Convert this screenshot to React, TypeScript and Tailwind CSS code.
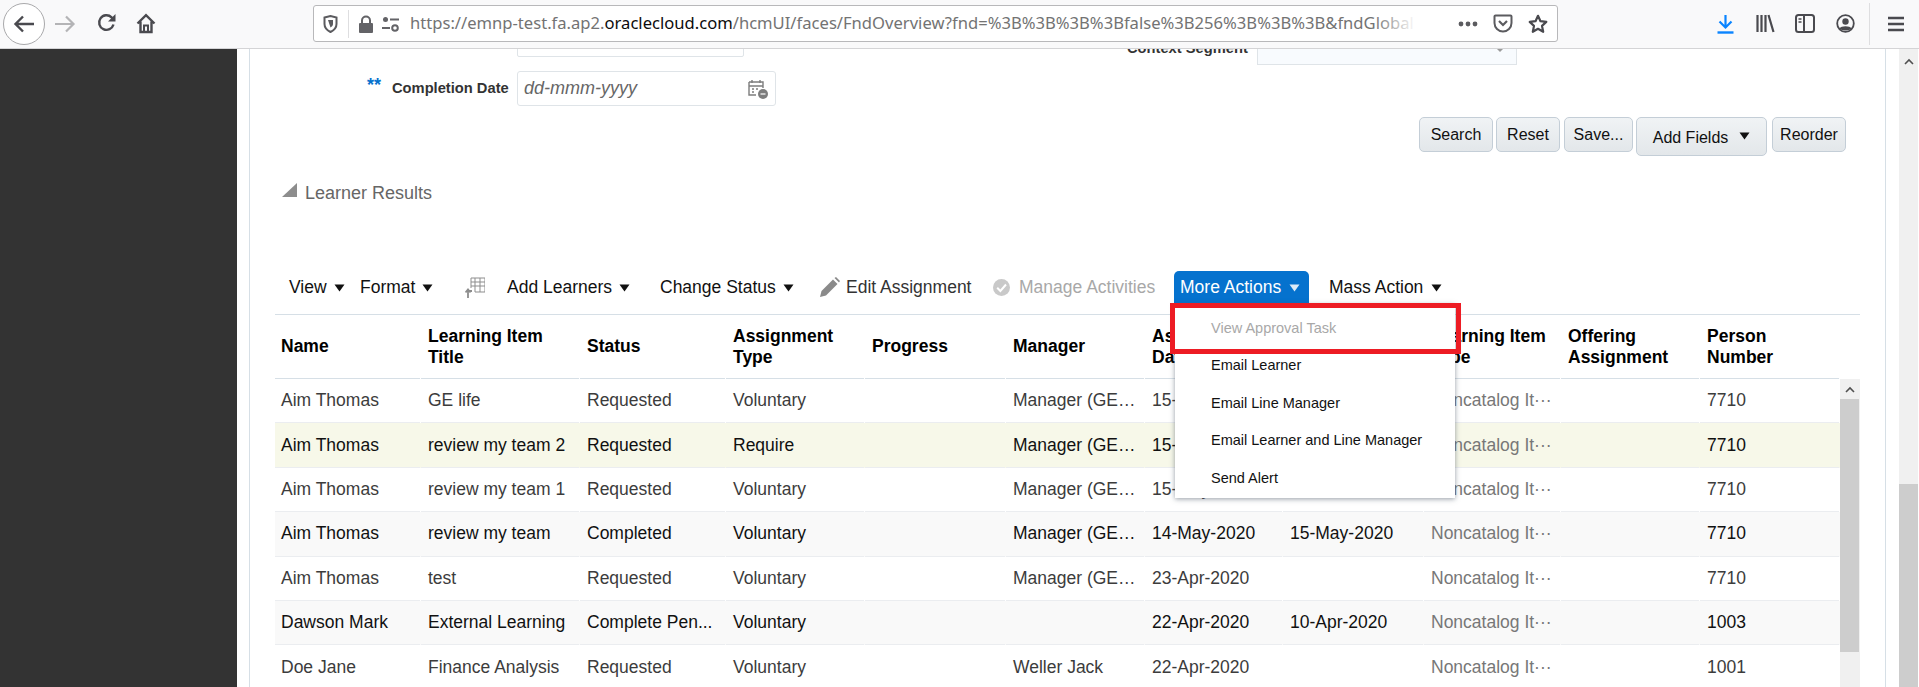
const ARIAL = "font-['Liberation_Sans',Arial,sans-serif]";

const COLS = "grid-cols-[146px_159px_146px_139px_141px_139px_138px_141px_137px_139px_140px]";

type Row = { c: string[]; bg: string; text: string };

const nc = "Noncatalog It\u00B7\u00B7\u00B7";
const mgr = "Manager (GE\u2026";

const rows: Row[] = [
  { c: ["Aim Thomas", "GE life", "Requested", "Voluntary", "", mgr, "15-May-2020", "", nc, "", "7710"], bg: "bg-white", text: "text-[#3c3c3c]" },
  { c: ["Aim Thomas", "review my team 2", "Requested", "Require", "", mgr, "15-May-2020", "", nc, "", "7710"], bg: "bg-[#f7f8e9]", text: "text-[#111111]" },
  { c: ["Aim Thomas", "review my team 1", "Requested", "Voluntary", "", mgr, "15-May-2020", "", nc, "", "7710"], bg: "bg-white", text: "text-[#3c3c3c]" },
  { c: ["Aim Thomas", "review my team", "Completed", "Voluntary", "", mgr, "14-May-2020", "15-May-2020", nc, "", "7710"], bg: "bg-[#f9f9f9]", text: "text-[#111111]" },
  { c: ["Aim Thomas", "test", "Requested", "Voluntary", "", mgr, "23-Apr-2020", "", nc, "", "7710"], bg: "bg-white", text: "text-[#3c3c3c]" },
  { c: ["Dawson Mark", "External Learning", "Complete Pen...", "Voluntary", "", "", "22-Apr-2020", "10-Apr-2020", nc, "", "1003"], bg: "bg-[#f9f9f9]", text: "text-[#111111]" },
  { c: ["Doe Jane", "Finance Analysis", "Requested", "Voluntary", "", "Weller Jack", "22-Apr-2020", "", nc, "", "1001"], bg: "bg-white", text: "text-[#3c3c3c]" },
];

const headers: string[][] = [
  ["Name"], ["Learning Item", "Title"], ["Status"], ["Assignment", "Type"], ["Progress"], ["Manager"],
  ["Assigned", "Date"], ["Completion", "Date"], ["Learning Item", "Type"], ["Offering", "Assignment"], ["Person", "Number"],
];

function Caret({ color = "#111111", className = "" }: { color?: string; className?: string }) {
  return (
    <svg width="11" height="8" viewBox="0 0 11 8" className={className}>
      <path d="M0.5 0.5H10.5L5.5 7.5Z" fill={color} />
    </svg>
  );
}

function Icon({ w, h, children, className = "" }: { w: number; h: number; children: React.ReactNode; className?: string }) {
  return (
    <svg width={w} height={h} viewBox={`0 0 ${w} ${h}`} className={`shrink-0 ${className}`}>
      {children}
    </svg>
  );
}

function BrowserBar() {
  const ic = "#4a4a4f";
  return (
    <div className={`h-[49px] shrink-0 bg-[#f9f9fa] border-b border-[#d4d4d6] flex items-center ${ARIAL}`}>
      <div className="ml-[3px] -mt-[1px] w-[42px] h-[42px] rounded-full border border-[#a9a9ab] bg-white flex items-center justify-center">
        <Icon w={22} h={20}>
          <path d="M21 10H3M10 2.5L2.5 10L10 17.5" fill="none" stroke={ic} strokeWidth="2.4" />
        </Icon>
      </div>
      <Icon w={21} h={20} className="ml-[10px] -mt-[1px]">
        <path d="M0 10H18M11 2.5L18.5 10L11 17.5" fill="none" stroke="#b4b4b6" strokeWidth="2.2" />
      </Icon>
      <Icon w={20} h={20} className="ml-[21px] -mt-[2px]">
        <path d="M16.5 11.5A7.3 7.3 0 1 1 14.6 4.4L17 6.5" fill="none" stroke={ic} strokeWidth="2.4" />
        <path d="M18.5 1V8.5H11Z" fill={ic} />
      </Icon>
      <Icon w={20} h={21} className="ml-[19px] -mt-[1px]">
        <path d="M1.5 10.5L10 2.2L18.5 10.5M4.5 8.5V19H15.5V8.5" fill="none" stroke={ic} strokeWidth="2.4" />
        <path d="M8 19V12.5H12V19" fill="none" stroke={ic} strokeWidth="2" />
      </Icon>
      <div className="relative ml-[157px] w-[1245px] h-[37px] -mt-[1px] bg-white border border-[#b8b8ba] rounded-[3px] flex items-center overflow-hidden">
        <Icon w={15} h={18} className="ml-[9px]">
          <path d="M1.5 2.5L7.5 1L13.5 2.5V9C13.5 13 10.5 15.5 7.5 17C4.5 15.5 1.5 13 1.5 9Z" fill="none" stroke="#5b5b5f" strokeWidth="2" />
          <path d="M5 5H10V9C10 10.5 9 11.5 7.5 12.5Z" fill="#5b5b5f" />
        </Icon>
        <div className="ml-[10px] w-px h-[28px] bg-[#dedee0]" />
        <Icon w={16} h={18} className="ml-[9px]">
          <path d="M4 8V5.5A4 4 0 0 1 12 5.5V8" fill="none" stroke="#636367" strokeWidth="2" />
          <rect x="1" y="8" width="14" height="10" rx="1" fill="#636367" />
        </Icon>
        <Icon w={17} h={16} className="ml-[8px]">
          <circle cx="3.5" cy="3.5" r="2.5" fill="#636367" />
          <path d="M8 3.5H17M0 12H8" stroke="#636367" strokeWidth="2" />
          <circle cx="13" cy="12" r="2.8" fill="none" stroke="#636367" strokeWidth="2" />
        </Icon>
        <div className="ml-[11px] w-[1003px] overflow-hidden whitespace-nowrap font-['Noto_Sans',sans-serif] text-[16.6px] text-[#737373]">
          https://emnp-test.fa.ap2.<span className="text-[#0c0c0d]">oraclecloud.com</span>/hcmUI/faces/FndOverview?fnd=%3B%3B%3B%3Bfalse%3B256%3B%3B%3B&amp;fndGlobalIte
        </div>
        <div className="absolute left-[1060px] top-0 w-[42px] h-full bg-gradient-to-r from-white/0 to-white" />
        <Icon w={20} h={6} className="ml-[45px]">
          <circle cx="3" cy="3" r="2.4" fill="#5b5b5f" />
          <circle cx="10" cy="3" r="2.4" fill="#5b5b5f" />
          <circle cx="17" cy="3" r="2.4" fill="#5b5b5f" />
        </Icon>
        <Icon w={20} h={19} className="ml-[15px]">
          <path d="M2.5 1.5H17.5A1 1 0 0 1 18.5 2.5V9A8.5 8.5 0 0 1 1.5 9V2.5A1 1 0 0 1 2.5 1.5Z" fill="none" stroke="#5b5b5f" strokeWidth="2" />
          <path d="M6 7L10 11L14 7" fill="none" stroke="#5b5b5f" strokeWidth="2.2" />
        </Icon>
        <Icon w={20} h={20} className="ml-[15px]">
          <path d="M10 1.8L12.5 7.2L18.3 7.9L14 11.9L15.2 17.8L10 14.8L4.8 17.8L6 11.9L1.7 7.9L7.5 7.2Z" fill="none" stroke="#4a4a4f" strokeWidth="2.2" strokeLinejoin="round" />
        </Icon>
      </div>
      <Icon w={17} h={20} className="ml-[159px] -mt-[1px]">
        <path d="M8.5 1V13M2.5 7.5L8.5 13.5L14.5 7.5" fill="none" stroke="#0a84ff" strokeWidth="2.2" />
        <path d="M0.5 18.5H16.5" stroke="#0a84ff" strokeWidth="2.4" />
      </Icon>
      <Icon w={19} h={19} className="ml-[22px] -mt-[1px]">
        <path d="M1.5 1V18M5.5 1V18M9.5 1V18M12.5 1L17.5 18" fill="none" stroke={ic} strokeWidth="2.2" />
      </Icon>
      <Icon w={20} h={19} className="ml-[20px] -mt-[1px]">
        <rect x="1" y="1" width="18" height="17" rx="2.5" fill="none" stroke={ic} strokeWidth="2" />
        <path d="M9 1V18" stroke={ic} strokeWidth="2" />
        <path d="M3.5 5H6.5M3.5 8H6.5" stroke={ic} strokeWidth="1.6" />
      </Icon>
      <Icon w={19} h={19} className="ml-[21px] -mt-[2px]">
        <circle cx="9.5" cy="9.5" r="8.3" fill="none" stroke={ic} strokeWidth="1.8" />
        <circle cx="9.5" cy="7.5" r="3.2" fill={ic} />
        <path d="M3.5 14.5C5 11.5 14 11.5 15.5 14.5C13.5 17 5.5 17 3.5 14.5Z" fill={ic} />
      </Icon>
      <div className="ml-[14px] w-px h-[42px] bg-[#dedee0]" />
      <Icon w={16} h={16} className="ml-[18px] -mt-[1px]">
        <path d="M0 2H16M0 8H16M0 14H16" stroke={ic} strokeWidth="2.4" />
      </Icon>
    </div>
  );
}

function FormArea() {
  const btn = "h-[35px] flex items-center justify-center rounded-[5px] border border-[#c4ced7] bg-gradient-to-b from-[#f0f3f5] to-[#e3e7ea] text-[16px] text-[#111111]";
  return (
    <div>
      <div className="h-[16px] overflow-hidden flex items-start">
        <div className="ml-[267px] w-[227px] h-[32px] -mt-[24px] border border-[#dfe4e8] rounded-[2px] bg-white shrink-0" />
        <div className="ml-[383px] w-[124px] -mt-[11px] text-[14.7px] leading-[21px] font-bold text-[#333333] whitespace-nowrap shrink-0">Context Segment</div>
        <div className="ml-[6px] w-[260px] h-[32px] -mt-[16px] border border-[#dfe4e8] bg-[#f8fbfe] shrink-0 flex justify-end items-end pr-[12px] pb-[12px]">
          <Icon w={8} h={4}><path d="M0 0H8L4 4Z" fill="#9a9a9a" /></Icon>
        </div>
      </div>
      <div className="mt-[6px] h-[35px] flex items-center">
        <span className="ml-[117px] w-[25px] -mt-[8px] text-[18px] leading-none font-bold text-[#0572ce]">**</span>
        <span className="w-[125px] text-[14.7px] font-bold text-[#333333] whitespace-nowrap">Completion Date</span>
        <div className="w-[259px] h-[35px] border border-[#dfe4e8] rounded-[3px] bg-white flex items-center justify-between pl-[6px] pr-[6px]">
          <span className="text-[18px] italic text-[#666666]">dd-mmm-yyyy</span>
          <Icon w={22} h={22}>
            <path d="M2 4H16V10M2 4V17H9M2 8H16M5 2V5M13 2V5" fill="none" stroke="#7d7d7d" strokeWidth="1.4" />
            <path d="M5 11H7M9 11H11M5 14H7" stroke="#7d7d7d" strokeWidth="1.4" />
            <circle cx="16" cy="16" r="5" fill="#7d7d7d" />
            <path d="M13.5 16H18.5" stroke="#ffffff" strokeWidth="1.2" />
          </Icon>
        </div>
      </div>
      <div className="mt-[11px] h-[39px] flex items-start justify-end pr-[39px]">
        <div className={`${btn} w-[74px]`}>Search</div>
        <div className={`${btn} w-[64px] ml-[3px]`}>Reset</div>
        <div className={`${btn} w-[69px] ml-[4px]`}>Save...</div>
        <div className={`${btn} !h-[39px] w-[131px] ml-[3px] gap-[11px] pb-0`}>
          <span className="mt-[3px]">Add Fields</span>
          <Caret className="-mt-[2px]" />
        </div>
        <div className={`${btn} w-[74px] ml-[5px]`}>Reorder</div>
      </div>
      <div className="mt-[25px] h-[24px] ml-[32px] flex items-center">
        <Icon w={15} h={14} className="-mt-[6px]"><path d="M15 0V14H0Z" fill="#8d8d8d" /></Icon>
        <span className="ml-[8px] text-[18px] text-[#666666]">Learner Results</span>
      </div>
    </div>
  );
}

function ActionBar() {
  return (
    <div className="h-[44px] border-b border-[#d6dfe6] flex items-start text-[17.5px] text-[#111111] whitespace-nowrap">
      <div className="h-[33px] w-[85px] pl-[14px] flex items-center">View<Caret className="ml-[7px]" /></div>
      <div className="h-[33px] w-[105px] flex items-center">Format<Caret className="ml-[7px]" /></div>
      <div className="h-[33px] w-[42px] flex items-center">
        <Icon w={20} h={22}>
          <path d="M6 1H20V15H10M6 1V11M6 5H20M6 9H20M10 1V15M15 1V15" fill="none" stroke="#8d8d8d" strokeWidth="1" />
          <path d="M3 21V13M0.5 15.5L3 12.5L5.5 15.5M3 14H7" fill="none" stroke="#8d8d8d" strokeWidth="1.8" />
        </Icon>
      </div>
      <div className="h-[33px] w-[153px] flex items-center">Add Learners<Caret className="ml-[7px]" /></div>
      <div className="h-[33px] w-[159px] flex items-center">Change Status<Caret className="ml-[7px]" /></div>
      <div className="h-[33px] w-[27px] flex items-center">
        <Icon w={21} h={21}>
          <path d="M1 20L2.5 14L14 2.5L18.5 7L7 18.5Z" fill="#8a8a8a" />
          <path d="M15.5 1L17 0L21 4L20 5.5Z" fill="#8a8a8a" />
        </Icon>
      </div>
      <div className="h-[33px] w-[147px] flex items-center text-[#333333]">Edit Assignment</div>
      <div className="h-[33px] w-[26px] flex items-center">
        <Icon w={17} h={17}>
          <circle cx="8.5" cy="8.5" r="8.5" fill="#c9c9c9" />
          <path d="M4.2 8.8L7.4 12L13 5.5" fill="none" stroke="#ffffff" strokeWidth="2" />
        </Icon>
      </div>
      <div className="h-[33px] w-[155px] flex items-center text-[#a8a8a8]">Manage Activities</div>
      <div className="relative w-[135px] h-[33px] rounded-t-[5px] bg-[#0572ce] text-white flex items-center pl-[6px]">
        More Actions
        <Caret color="#dbeaf7" className="ml-[8px]" />
        <div className="absolute left-[1px] top-full w-[280px] h-[194px] z-20 bg-white shadow-[0_1px_5px_rgba(60,75,90,0.55)] pt-[6px] pl-[36px] text-[14.5px] text-[#111111]">
          <div className="h-[37.5px] flex items-center text-[#a8a8a8]">View Approval Task</div>
          <div className="h-[37.5px] flex items-center">Email Learner</div>
          <div className="h-[37.5px] flex items-center">Email Line Manager</div>
          <div className="h-[37.5px] flex items-center">Email Learner and Line Manager</div>
          <div className="h-[37.5px] flex items-center">Send Alert</div>
          <div className="absolute -left-[5px] -top-[1px] w-[291px] h-[51px] border-[5px] border-[#ed1c24]" />
        </div>
      </div>
      <div className="h-[33px] ml-[20px] flex items-center">Mass Action<Caret className="ml-[8px]" /></div>
    </div>
  );
}

function ResultsTable() {
  return (
    <div className="text-[17.5px] leading-[21px]">
      <div className={`grid ${COLS} h-[64px]`}>
        {headers.map((h, i) => (
          <div key={i} className={`mr-px border-b border-[#d6dfe6] flex flex-col justify-center font-bold text-black whitespace-nowrap ${i === 0 ? "pl-[6px]" : "pl-[7px]"}`}>
            {h.map((l) => <span key={l}>{l}</span>)}
          </div>
        ))}
      </div>
      <div className="flex">
        <div className="w-[1565px]">
          {rows.map((r, ri) => (
            <div key={ri} className={`grid ${COLS} h-[44.4px] ${r.bg} ${r.text}`}>
              {r.c.map((v, i) => (
                <div key={i} className={`mr-px border-b border-[#ebedf0] flex items-center whitespace-nowrap overflow-hidden ${i === 0 ? "pl-[6px]" : "pl-[7px]"} ${i === 8 ? "text-[#777777]" : ""}`}>
                  {v}
                </div>
              ))}
            </div>
          ))}
        </div>
        <div className="w-[20px] h-[311px] bg-[#f0f0f0]">
          <div className="h-[20px] flex items-center justify-center">
            <Icon w={10} h={7}><path d="M1 6L5 2L9 6" fill="none" stroke="#505050" strokeWidth="1.6" /></Icon>
          </div>
          <div className="w-[19px] h-[253px] bg-[#cdcdcd]" />
        </div>
      </div>
    </div>
  );
}

export default function App() {
  return (
    <div className={`h-[687px] w-[1919px] overflow-hidden flex flex-col bg-white ${ARIAL}`}>
      <BrowserBar />
      <div className="flex-1 flex min-h-0 overflow-hidden">
        <div className="w-[237px] shrink-0 bg-[#333333]" />
        <div className="w-[12px] shrink-0 bg-white" />
        <div className="w-[637px] flex-1 border-x border-[#d6dfe6] overflow-hidden">
          <FormArea />
          <div className="mt-[66px] ml-[25px] mr-[25px]">
            <ActionBar />
            <ResultsTable />
          </div>
        </div>
        <div className="w-[13px] shrink-0 bg-white" />
        <div className="w-[19px] shrink-0 bg-[#f0f0f0]">
          <div className="h-[24px] flex items-center justify-center">
            <Icon w={10} h={7}><path d="M1 6L5 2L9 6" fill="none" stroke="#505050" strokeWidth="1.6" /></Icon>
          </div>
          <div className="mt-[411px] h-[300px] bg-[#cdcdcd]" />
        </div>
        <div className="w-px shrink-0 bg-white" />
      </div>
    </div>
  );
}
